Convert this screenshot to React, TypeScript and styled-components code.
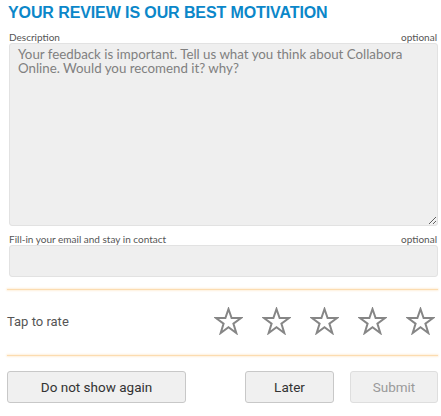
import React, { useState } from 'react';
import styled, { createGlobalStyle } from 'styled-components';

const GlobalStyle = createGlobalStyle`
  html, body {
    margin: 0;
    padding: 0;
    background: #ffffff;
  }
  * {
    box-sizing: border-box;
  }
`;

const Panel = styled.div`
  width: 441px;
  padding: 2px 3px 0 7px;
  display: flex;
  flex-direction: column;
`;

const Title = styled.h2`
  margin: 0;
  padding-left: 1px;
  font-family: 'Liberation Sans', Arial, sans-serif;
  font-weight: 700;
  font-size: 16px;
  line-height: 21px;
  color: #0b87c9;
  letter-spacing: -0.1px;
`;

const FieldHead = styled.div<{ $top: number }>`
  display: flex;
  justify-content: space-between;
  align-items: flex-end;
  padding: 0 1px 0 2px;
  margin-top: ${(p) => p.$top}px;
  height: 12px;
  font-family: Lato, 'Open Sans', sans-serif;
  font-size: 10px;
  line-height: 12px;
  color: #555;
`;

const fieldBox = `
  display: block;
  width: 429px;
  margin-left: 2px;
  background: #efefef;
  border: 1px solid #e2e2e2;
  border-radius: 3px;
  outline: none;
  font-family: Lato, 'Open Sans', sans-serif;
  font-size: 13.3px;
  color: #444;
`;

const TextArea = styled.textarea`
  ${fieldBox}
  height: 183px;
  padding: 3px 8px;
  line-height: 14px;
  resize: vertical;

  &::placeholder {
    color: #808080;
  }
`;

const TextInput = styled.input`
  ${fieldBox}
  height: 32px;
  padding: 0 8px;
`;

const Spacer = styled.div<{ $h: number }>`
  height: ${(p) => p.$h}px;
  flex: none;
`;

const Divider = styled.div`
  height: 1px;
  width: 431px;
  background: #fcdcb0;
  box-shadow: 0 0 2px 0.5px #fde7c8;
`;

const RateRow = styled.div`
  height: 65px;
  display: flex;
  align-items: center;
  justify-content: space-between;
`;

const RateLabel = styled.span`
  font-family: Roboto, 'Liberation Sans', sans-serif;
  font-size: 13px;
  color: #555;
  margin-top: -3px;
`;

const Stars = styled.div`
  display: flex;
  gap: 19px;
  margin-right: 3px;
  margin-top: -4px;
`;

const StarButton = styled.button`
  width: 29px;
  height: 28px;
  padding: 0;
  border: none;
  background: none;
  cursor: pointer;
  display: flex;

  svg {
    width: 29px;
    height: 28px;
  }
`;

const ButtonRow = styled.div`
  display: flex;
  align-items: center;
  margin-top: 15px;
`;

const Button = styled.button<{ $width: number; $disabled?: boolean; $gap?: number }>`
  width: ${(p) => p.$width}px;
  height: 32px;
  margin-left: ${(p) => p.$gap ?? 0}px;
  background: #f0f0f0;
  border: 1px solid ${(p) => (p.$disabled ? '#dedede' : '#c8c8c8')};
  border-radius: 3px;
  font-family: Roboto, 'Liberation Sans', sans-serif;
  font-size: 13.5px;
  color: ${(p) => (p.$disabled ? '#9a9a9a' : '#333')};
  cursor: ${(p) => (p.$disabled ? 'default' : 'pointer')};
`;

const StarIcon: React.FC<{ filled: boolean }> = ({ filled }) => (
  <svg viewBox="0 0 29 28">
    <polygon
      points="14.5,2 17.6,11 27,11 19.4,16.6 22.3,26 14.5,20.2 6.7,26 9.6,16.6 2,11 11.4,11"
      fill={filled ? '#f5a623' : 'none'}
      stroke={filled ? '#f5a623' : '#868686'}
      strokeWidth="2"
      strokeLinejoin="miter"
    />
  </svg>
);

const App: React.FC = () => {
  const [rating, setRating] = useState(0);

  return (
    <>
      <GlobalStyle />
      <Panel>
        <Title>YOUR REVIEW IS OUR BEST MOTIVATION</Title>
        <FieldHead $top={8}>
          <span>Description</span>
          <span>optional</span>
        </FieldHead>
        <TextArea placeholder="Your feedback is important. Tell us what you think about Collabora Online. Would you recomend it? why?" />
        <FieldHead $top={7}>
          <span>Fill-in your email and stay in contact</span>
          <span>optional</span>
        </FieldHead>
        <TextInput type="email" />
        <Spacer $h={12} />
        <Divider />
        <RateRow>
          <RateLabel>Tap to rate</RateLabel>
          <Stars>
            {[1, 2, 3, 4, 5].map((n) => (
              <StarButton key={n} onClick={() => setRating(n)}>
                <StarIcon filled={n <= rating} />
              </StarButton>
            ))}
          </Stars>
        </RateRow>
        <Divider />
        <ButtonRow>
          <Button $width={179}>Do not show again</Button>
          <Button $width={89} $gap={59}>Later</Button>
          <Button $width={88} $gap={16} $disabled={rating === 0}>Submit</Button>
        </ButtonRow>
      </Panel>
    </>
  );
};

export default App;
